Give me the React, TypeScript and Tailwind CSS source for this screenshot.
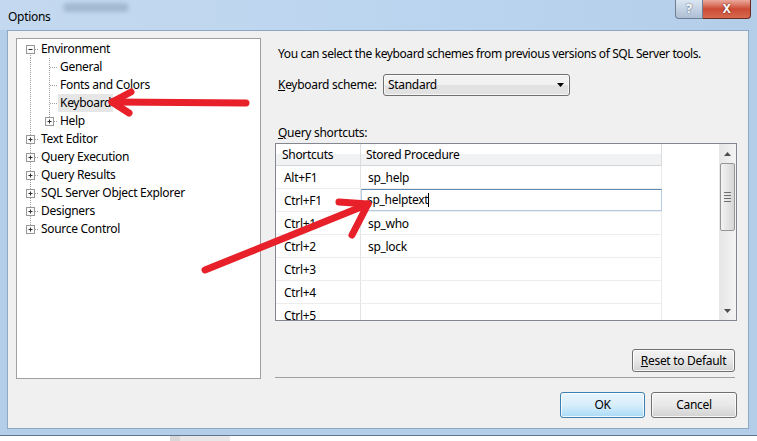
import React from 'react';

// tree data
type TreeRow = {
  label: string;
  level: 0 | 1;
  expander?: 'plus' | 'minus';
  first?: boolean;
  last?: boolean;
  selected?: boolean;
};

const treeRows: TreeRow[] = [
  {label: 'Environment', level: 0, expander: 'minus', first: true},
  {label: 'General', level: 1},
  {label: 'Fonts and Colors', level: 1},
  {label: 'Keyboard', level: 1, selected: true},
  {label: 'Help', level: 1, expander: 'plus', last: true},
  {label: 'Text Editor', level: 0, expander: 'plus'},
  {label: 'Query Execution', level: 0, expander: 'plus'},
  {label: 'Query Results', level: 0, expander: 'plus'},
  {label: 'SQL Server Object Explorer', level: 0, expander: 'plus'},
  {label: 'Designers', level: 0, expander: 'plus'},
  {label: 'Source Control', level: 0, expander: 'plus', last: true},
];

const shortcuts = [
  {key: 'Alt+F1', proc: 'sp_help'},
  {key: 'Ctrl+F1', proc: 'sp_helptext', editing: true},
  {key: 'Ctrl+1', proc: 'sp_who'},
  {key: 'Ctrl+2', proc: 'sp_lock'},
  {key: 'Ctrl+3', proc: ''},
  {key: 'Ctrl+4', proc: ''},
  {key: 'Ctrl+5', proc: ''},
];

const dot = {stroke: '#a0a0a0', strokeDasharray: '1 1', strokeWidth: 1};

const Expander = ({x, kind}: {x: number; kind: 'plus' | 'minus'}) => (
  <g>
    <rect x={x - 4} y={5.5} width={8} height={8} fill="#fbfbfb" stroke="#979797" />
    <line x1={x - 2} y1={9.5} x2={x + 2} y2={9.5} stroke="#2d2d2d" />
    {kind === 'plus' && <line x1={x} y1={7.5} x2={x} y2={11.5} stroke="#2d2d2d" />}
  </g>
);

const TreeItem = ({row}: {row: TreeRow}) => {
  const w = row.level === 0 ? 22 : 41;
  return (
    <div className="flex h-[18px] items-center">
      <svg width={w} height={18} className="shrink-0">
        {row.level === 0 ? (
          <>
            <line x1={13.5} y1={row.first ? 9 : 0} x2={13.5} y2={row.last ? 9 : 18} {...dot} />
            <line x1={14} y1={9.5} x2={22} y2={9.5} {...dot} />
            {row.expander && <Expander x={13.5} kind={row.expander} />}
          </>
        ) : (
          <>
            <line x1={13.5} y1={0} x2={13.5} y2={18} {...dot} />
            <line x1={32.5} y1={0} x2={32.5} y2={row.last ? 9 : 18} {...dot} />
            <line x1={33} y1={9.5} x2={41} y2={9.5} {...dot} />
            {row.expander && <Expander x={32.5} kind={row.expander} />}
          </>
        )}
      </svg>
      <span className={row.selected ? 'px-[2px] bg-[#e6e6e6] leading-[18px]' : 'px-[2px] leading-[18px]'}>
        {row.label}
      </span>
    </div>
  );
};

const Scrollbar = () => (
  <div className="w-[17px] h-full flex flex-col bg-gradient-to-r from-[#e6e6e6] to-[#f4f4f4]">
    <div className="h-[19px] flex items-center justify-center">
      <svg width={7} height={4}>
        <path d="M0 4 L3.5 0 L7 4 Z" fill="#4d4d4d" />
      </svg>
    </div>
    <div className="mx-[1px] h-[68px] rounded-[2px] border border-[#969696] bg-gradient-to-r from-[#f3f3f3] to-[#d6d6d6] flex flex-col items-center justify-center gap-[2px]">
      <div className="w-[7px] h-px bg-[#6f6f6f]" />
      <div className="w-[7px] h-px bg-[#6f6f6f]" />
      <div className="w-[7px] h-px bg-[#6f6f6f]" />
      <div className="w-[7px] h-px bg-[#6f6f6f]" />
    </div>
    <div className="flex-1" />
    <div className="h-[19px] flex items-center justify-center">
      <svg width={7} height={4}>
        <path d="M0 0 L3.5 4 L7 0 Z" fill="#4d4d4d" />
      </svg>
    </div>
  </div>
);

const ShortcutTable = () => (
  <div className="h-[178px] border border-[#828790] bg-white flex overflow-hidden">
    <div className="w-[386px] flex flex-col">
      <div className="h-[22px] shrink-0 flex bg-gradient-to-b from-white from-50% to-[#f1f2f4] to-50% border-b border-[#d5d5d5]">
        <div className="w-[85px] pl-[6px] flex items-center border-r border-[#dcdcdc]">Shortcuts</div>
        <div className="flex-1 pl-[5px] flex items-center border-r border-[#dcdcdc]">Stored Procedure</div>
      </div>
      {shortcuts.map(s => (
        <div key={s.key} className="h-[23px] shrink-0 flex border-b border-[#ececec] pt-[2px]">
          <div className="w-[85px] pl-[8px] flex items-center border-r border-[#e4e4e4] -mt-[2px] pt-[2px]">{s.key}</div>
          {s.editing ? (
            <div className="flex-1 pl-[5px] flex items-center border border-[#b4cbe3] border-t-[#5f8bb3] -mt-[2px]">
              <span>{s.proc}</span>
              <span className="w-px h-[14px] bg-black" />
            </div>
          ) : (
            <div className="flex-1 pl-[7px] flex items-center border-r border-[#ececec] -mt-[2px] pt-[2px]">{s.proc}</div>
          )}
        </div>
      ))}
    </div>
    <div className="flex-1" />
    <Scrollbar />
  </div>
);

const WinButton = ({children, primary, className}: {children: React.ReactNode; primary?: boolean; className?: string}) => (
  <div
    className={
      'rounded-[3px] border flex items-center justify-center shadow-[inset_0_0_0_1px_rgba(255,255,255,0.8)] ' +
      (primary
        ? 'border-[#3c7fb1] bg-gradient-to-b from-[#e9f5fc] via-[#d7eefb] to-[#a9daf6] '
        : 'border-[#707070] bg-gradient-to-b from-[#f3f3f3] via-[#e8e8e8] to-[#d2d2d2] ') +
      (className ?? '')
    }>
    {children}
  </div>
);

export default function App() {
  return (
    <div className="relative w-[757px] h-[441px] overflow-hidden bg-[#b4cde9] text-[12px] text-black font-['Noto_Sans','Open_Sans',sans-serif] tracking-[-0.3px]">
      {/* title bar */}
      <div className="h-[30px] flex items-start bg-gradient-to-r from-[#c4d9ef] via-[#bcd5ef] to-[#b4ceea]">
        <div className="pl-[8px] pt-[8px] text-[12px] leading-[18px]">Options</div>
        <div className="ml-[12px] mt-[3px] w-[66px] h-[9px] rounded-full bg-[#8ea4be] opacity-60 blur-[2px]" />
        <div className="flex-1" />
        <div className="flex mr-[6px]">
          <div className="w-[28px] h-[19px] rounded-bl-[4px] border border-t-0 border-[#6e7f94] bg-gradient-to-b from-[#dbe6f2] to-[#aebfd5] flex items-center justify-center text-white font-bold text-[12px] [text-shadow:0_0_2px_#30455e]">
            ?
          </div>
          <div className="w-[48px] h-[19px] rounded-br-[4px] border border-t-0 border-l-0 border-[#6b2a20] bg-gradient-to-b from-[#e9a99c] via-[#cc4a35] to-[#d66a4f] flex items-center justify-center text-white font-bold text-[12px] [text-shadow:0_0_2px_#5a1508]">
            X
          </div>
        </div>
      </div>

      {/* frame + client */}
      <div className="flex h-[399px]">
        <div className="w-[7px]" />
        <div className="w-[742px] border border-[#8ea7c4] bg-[#f0f0f0] flex items-start">
          {/* tree */}
          <div className="ml-[8px] mt-[7px] w-[245px] h-[341px] border border-[#a0a0a0] bg-white pt-px">
            {treeRows.map(r => (
              <TreeItem key={r.label} row={r} />
            ))}
          </div>

          {/* right pane */}
          <div className="ml-[14px] w-[462px] flex flex-col pt-[15px]">
            <div className="pl-[3px] leading-[16px] tracking-[-0.4px]">
              You can select the keyboard schemes from previous versions of SQL Server tools.
            </div>
            <div className="mt-[12px] flex items-center h-[22px]">
              <div className="pl-[3px] w-[108px]">
                <u>K</u>eyboard scheme:
              </div>
              <div className="w-[187px] h-[22px] rounded-[3px] border border-[#707070] bg-gradient-to-b from-[#f2f2f2] from-50% to-[#e2e2e2] to-50% flex items-center pl-[4px] pr-[5px] shadow-[inset_0_0_0_1px_rgba(255,255,255,0.7)]">
                <span className="flex-1">Standard</span>
                <svg width={7} height={4}>
                  <path d="M0 0 L7 0 L3.5 4 Z" fill="#000" />
                </svg>
              </div>
            </div>
            <div className="mt-[29px] pl-[3px] leading-[16px]">
              <u>Q</u>uery shortcuts:
            </div>
            <div className="mt-[2px]">
              <ShortcutTable />
            </div>
            <div className="mt-[28px] self-end mr-[2px]">
              <WinButton className="w-[103px] h-[23px]">
                <span>
                  <u>R</u>eset to Default
                </span>
              </WinButton>
            </div>
            <div className="mt-[5px] mr-[2px] h-px bg-[#a0a0a0]" />
            <div className="mt-[14px] flex justify-end gap-[6px]">
              <WinButton primary className="w-[85px] h-[26px]">
                OK
              </WinButton>
              <WinButton className="w-[86px] h-[26px]">Cancel</WinButton>
            </div>
          </div>
        </div>
        <div className="w-[8px]" />
      </div>
      <div className="h-[7px] border-b border-[#5d7390]" />
      <div className="h-[5px] bg-white flex">
        <div className="w-[170px]" />
        <div className="w-[10px] bg-[#d8d8d8]" />
        <div className="w-[50px] bg-[#e8e8e8]" />
      </div>

      {/* red marker arrows drawn over the dialog */}
      <svg className="absolute left-0 top-0 pointer-events-none" width={757} height={441}>
        <g stroke="#e8202a" strokeWidth={7} strokeLinecap="round" strokeLinejoin="round" fill="none">
          <path d="M246 103 L114 102" />
          <path d="M112 102 L131 92" />
          <path d="M112 102 L129 113" />
          <path d="M205 270 L366 205" />
          <path d="M368 204 L339 202" />
          <path d="M368 204 L352 235" />
        </g>
      </svg>
    </div>
  );
}
